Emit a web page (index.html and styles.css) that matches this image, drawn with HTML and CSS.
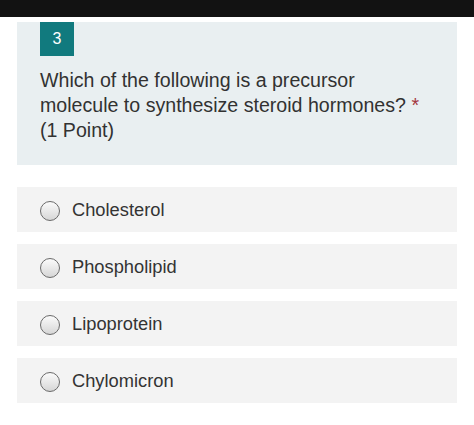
FILE: index.html
```html
<!DOCTYPE html>
<html lang="en">
<head>
<meta charset="utf-8">
<title>Question 3</title>
<link rel="stylesheet" href="styles.css">
</head>
<body>
<div class="topbar"></div>
<main class="page">
  <section class="question">
    <div class="badge">3</div>
    <p class="title">Which of the following is a precursor molecule to synthesize steroid hormones? <span class="req">*</span><br>(1 Point)</p>
  </section>
  <ul class="options">
    <li class="option"><span class="radio"></span><span class="label">Cholesterol</span></li>
    <li class="option"><span class="radio"></span><span class="label">Phospholipid</span></li>
    <li class="option"><span class="radio"></span><span class="label">Lipoprotein</span></li>
    <li class="option"><span class="radio"></span><span class="label">Chylomicron</span></li>
  </ul>
</main>
</body>
</html>
```
FILE: styles.css
```css
html, body {
  margin: 0;
  padding: 0;
  background: #ffffff;
}
body {
  font-family: "Liberation Sans", Arial, sans-serif;
  color: #333333;
}
.topbar {
  height: 17px;
  background: #121212;
}
.page {
  padding: 5px 17px 0 17px;
}
.question {
  background: #e9eff1;
  padding: 0 23px 22px 23px;
}
.badge {
  width: 34px;
  height: 34px;
  background: #117a7e;
  color: #ffffff;
  font-size: 16px;
  display: flex;
  align-items: center;
  justify-content: center;
}
.title {
  margin: 12px 0 0 0;
  font-size: 19.6px;
  line-height: 25px;
  color: #323232;
}
.req {
  color: #a4373f;
}
.options {
  list-style: none;
  margin: 22px 0 0 0;
  padding: 0;
  display: flex;
  flex-direction: column;
  gap: 12px;
}
.option {
  height: 45px;
  background: #f3f3f3;
  display: flex;
  align-items: center;
  padding-left: 23px;
  gap: 12px;
}
.radio {
  flex: none;
  width: 18px;
  height: 18px;
  border: 1.5px solid #6a6a6a;
  border-radius: 50%;
  background: linear-gradient(#fbfbfb, #d6d6d6);
  margin-top: 2px;
}
.label {
  font-size: 18.3px;
  color: #333333;
}
```
